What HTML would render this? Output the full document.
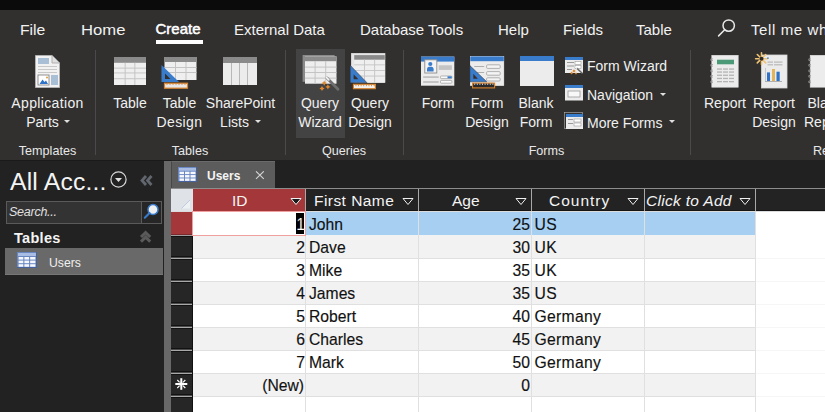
<!DOCTYPE html>
<html><head><meta charset="utf-8">
<style>
*{margin:0;padding:0;box-sizing:border-box}
html,body{width:825px;height:412px;overflow:hidden;background:#262626;font-family:"Liberation Sans",sans-serif;color:#fff}
.a{position:absolute;white-space:nowrap}
#top{left:0;top:0;width:825px;height:10px;background:#0b0b0b}
#rib{left:0;top:10px;width:825px;height:150px;background:#31302f}
.tab{font-size:15px;color:#f2f2f2;top:20.5px}
.rl{font-size:14px;color:#f0f0f0;text-align:center;line-height:19px}
.gl{font-size:12.6px;color:#e8e8e8;top:143.5px}
.sep{width:1px;background:#4a4a4a;top:50px;height:105px}
.ar{display:inline-block;width:0;height:0;border-left:3.5px solid transparent;border-right:3.5px solid transparent;border-top:3.5px solid #e0e0e0;vertical-align:middle;margin-left:6px;position:relative;top:-2px}
.hd{font-size:15.5px;color:#f4f4f4;top:191.5px}
.dt{font-size:15.7px;color:#111;-webkit-text-stroke:0.15px #111}
</style></head><body>
<div class="a" id="top"></div>
<div class="a" id="rib"></div>
<!-- tabs -->
<div class="a tab" style="left:20px;transform:scaleX(1.05);transform-origin:0 0">File</div>
<div class="a tab" style="left:80.5px;transform:scaleX(1.11);transform-origin:0 0">Home</div>
<div class="a tab" style="left:155.5px;top:20px;font-size:15px;-webkit-text-stroke:0.5px #fff;color:#fff">Create</div>
<div class="a" style="left:156px;top:40px;width:47px;height:4px;background:#fff"></div>
<div class="a tab" style="left:234px">External Data</div>
<div class="a tab" style="left:360px">Database Tools</div>
<div class="a tab" style="left:498px">Help</div>
<div class="a tab" style="left:563px">Fields</div>
<div class="a tab" style="left:636px">Table</div>
<svg class="a" style="left:716px;top:18px" width="22" height="22" viewBox="0 0 22 22"><circle cx="12.7" cy="7.6" r="5.7" fill="none" stroke="#e8e8e8" stroke-width="1.5"/><line x1="8.7" y1="11.7" x2="2.6" y2="17.9" stroke="#e8e8e8" stroke-width="1.5" stroke-linecap="round"/></svg>
<div class="a tab" style="left:751px;letter-spacing:0.6px">Tell me what you want to do</div>

<!-- separators -->
<div class="a sep" style="left:95px"></div>
<div class="a sep" style="left:285px"></div>
<div class="a sep" style="left:403px"></div>
<div class="a sep" style="left:690px"></div>

<!-- Templates group -->
<svg class="a" style="left:35px;top:55px" width="26" height="34" viewBox="0 0 26 34">
<path d="M0.5 0.5H17L24.5 8V32.5H0.5Z" fill="#f2f2f2" stroke="#b0b0b0"/>
<path d="M17 0.5V8H24.5" fill="#e0e0e0" stroke="#b0b0b0"/>
<rect x="3" y="3" width="11" height="6" fill="#a9bfd6"/>
<rect x="3" y="11" width="19" height="1" fill="#c8c8c8"/><rect x="3" y="14" width="19" height="1" fill="#c8c8c8"/><rect x="3" y="17" width="19" height="1" fill="#c8c8c8"/>
<rect x="3" y="20" width="11" height="10" fill="#fff" stroke="#777" stroke-width="0.8"/>
<path d="M4.5 29L7.5 24.5L9.5 27L11 25.5L13 29Z" fill="#2f73c8"/><circle cx="12" cy="22.5" r="1" fill="#e0a040"/>
<rect x="16" y="20" width="7" height="10" fill="#a9bfd6"/>
</svg>
<div class="a rl" style="left:0;top:94px;width:95px"><span style="letter-spacing:0.35px">Application</span><br><span style="position:relative;left:1px">Parts</span><span class="ar"></span></div>
<div class="a gl" style="left:0;width:95px;text-align:center">Templates</div>

<!-- Tables group -->
<svg class="a" style="left:114px;top:57px" width="32" height="28" viewBox="0 0 33 29" preserveAspectRatio="none">
<rect x="0" y="0" width="33" height="29" fill="#efefef"/>
<rect x="0" y="0" width="33" height="6" fill="#8a8a8a"/>
<rect x="11" y="6" width="1" height="23" fill="#c4c4c4"/><rect x="21" y="6" width="1" height="23" fill="#c4c4c4"/>
<rect x="0" y="11" width="33" height="1" fill="#c4c4c4"/><rect x="0" y="16" width="33" height="1" fill="#c4c4c4"/><rect x="0" y="22" width="33" height="1" fill="#c4c4c4"/>
</svg>
<svg class="a" style="left:161px;top:57px" width="37" height="33" viewBox="0 0 37 33">
<rect x="3.5" y="0" width="32" height="23" fill="#efefef"/>
<rect x="3.5" y="0" width="32" height="5" fill="#8a8a8a"/>
<rect x="14" y="5" width="1" height="18" fill="#c4c4c4"/><rect x="24.5" y="5" width="1" height="18" fill="#c4c4c4"/>
<rect x="3.5" y="10" width="32" height="1" fill="#c4c4c4"/><rect x="3.5" y="15" width="32" height="1" fill="#c4c4c4"/>
<path d="M0.5 8L18 25H0.5Z" fill="#3a7ccc"/><path d="M4 16.5L9.5 22H4Z" fill="#31302f"/>
<rect x="3.5" y="26.2" width="23" height="5" fill="#e8e8e8" stroke="#d9822b" stroke-width="1.2"/>
<path d="M6 26.5V28M9 26.5V28M12 26.5V28M15 26.5V28M18 26.5V28M21 26.5V28M24 26.5V28" stroke="#d9822b" stroke-width="0.8"/>
</svg>
<svg class="a" style="left:223px;top:57px" width="34" height="28" viewBox="0 0 34 28">
<rect x="0" y="0" width="34" height="28" fill="#ececec"/>
<rect x="0" y="0" width="34" height="6" fill="#8a8a8a"/>
<rect x="8" y="6" width="1" height="22" fill="#b8b8b8"/><rect x="16" y="6" width="1" height="22" fill="#b8b8b8"/><rect x="24" y="6" width="1" height="22" fill="#b8b8b8"/>
</svg>
<div class="a rl" style="left:110px;top:94px;width:40px">Table</div>
<div class="a rl" style="left:152px;top:94px;width:55px">Table<br><span style="letter-spacing:0.4px">Design</span></div>
<div class="a rl" style="left:204px;top:94px;width:73px">SharePoint<br>Lists<span class="ar"></span></div>
<div class="a gl" style="left:95px;width:190px;text-align:center">Tables</div>

<!-- Queries -->
<div class="a" style="left:296px;top:49px;width:49px;height:89px;background:#434343"></div>
<svg class="a" style="left:302px;top:55px" width="40" height="37" viewBox="0 0 40 37">
<rect x="0.6" y="-0.2" width="32" height="27" fill="#8a8a8a"/>
<rect x="3" y="1.4" width="31.5" height="27.3" fill="#eeeeee"/>
<rect x="3" y="1.4" width="31.5" height="4.8" fill="#8a8a8a"/>
<rect x="12.6" y="6.2" width="1" height="22.5" fill="#c4c4c4"/><rect x="23.2" y="6.2" width="1" height="22.5" fill="#c4c4c4"/>
<rect x="3" y="11.6" width="31.5" height="1" fill="#c4c4c4"/><rect x="3" y="17" width="31.5" height="1" fill="#c4c4c4"/><rect x="3" y="22.6" width="31.5" height="1" fill="#c4c4c4"/>
<line x1="25" y1="23" x2="36" y2="34.3" stroke="#6e6e6e" stroke-width="2.8" stroke-linecap="round"/>
<line x1="24.6" y1="22.6" x2="26.8" y2="24.9" stroke="#f4f4f4" stroke-width="1.8" stroke-linecap="round"/>
<path d="M22.2 25.5L23.11 27.19L24.8 28.1L23.11 29.01L22.2 30.700000000000003L21.29 29.01L19.599999999999998 28.1L21.29 27.19Z" fill="#e0862b"/><path d="M20 30.9L20.91 32.59L22.6 33.5L20.91 34.41L20 36.1L19.09 34.41L17.4 33.5L19.09 32.59Z" fill="#e0862b"/><path d="M25.9 29.299999999999997L26.81 30.99L28.5 31.9L26.81 32.809999999999995L25.9 34.5L24.99 32.809999999999995L23.299999999999997 31.9L24.99 30.99Z" fill="#e0862b"/>
</svg>
<svg class="a" style="left:350px;top:53px" width="37" height="37" viewBox="0 0 37 37">
<rect x="1.1" y="0.1" width="34.2" height="29.6" fill="#e6e6e6"/>
<rect x="4.2" y="2.1" width="30.6" height="27.6" fill="#efefef"/>
<rect x="4.2" y="2.1" width="30.6" height="4.6" fill="#8a8a8a"/>
<rect x="14" y="6.7" width="0.9" height="23" fill="#c4c4c4"/><rect x="24.2" y="6.7" width="0.9" height="23" fill="#c4c4c4"/>
<rect x="4.2" y="11.4" width="30.6" height="0.9" fill="#c4c4c4"/><rect x="4.2" y="17" width="30.6" height="0.9" fill="#c4c4c4"/><rect x="4.2" y="22.6" width="30.6" height="0.9" fill="#c4c4c4"/>
<path d="M0.2 12.3L17 29.7H0.2Z" fill="#3a7ccc" stroke="#31302f" stroke-width="0.5"/><path d="M3.6 21.3L8.4 26.3H3.6Z" fill="#31302f"/>
<rect x="3.4" y="31.3" width="22" height="4.4" fill="#f2f2f2" stroke="#d9822b" stroke-width="1.1"/><rect x="5.5" y="31.8" width="0.9" height="1.4" fill="#d9822b"/><rect x="8.1" y="31.8" width="0.9" height="1.4" fill="#d9822b"/><rect x="10.7" y="31.8" width="0.9" height="1.4" fill="#d9822b"/><rect x="13.3" y="31.8" width="0.9" height="1.4" fill="#d9822b"/><rect x="15.9" y="31.8" width="0.9" height="1.4" fill="#d9822b"/><rect x="18.5" y="31.8" width="0.9" height="1.4" fill="#d9822b"/><rect x="21.1" y="31.8" width="0.9" height="1.4" fill="#d9822b"/><rect x="23.7" y="31.8" width="0.9" height="1.4" fill="#d9822b"/>
</svg>
<div class="a rl" style="left:294px;top:94px;width:52px">Query<br>Wizard</div>
<div class="a rl" style="left:344px;top:94px;width:52px">Query<br>Design</div>
<div class="a gl" style="left:285px;width:118px;text-align:center">Queries</div>

<!-- Forms -->
<svg class="a" style="left:421px;top:56px" width="34" height="31" viewBox="0 0 34 31">
<rect x="0" y="0.6" width="33.3" height="29.1" fill="#ececec"/><rect x="0" y="0.6" width="33.3" height="5" fill="#3a7ccc"/>
<rect x="3.8" y="3.8" width="12" height="13.2" fill="#f4f4f4" stroke="#8c8c8c" stroke-width="0.9"/>
<circle cx="9.3" cy="8" r="2.1" fill="#3a7ccc"/><path d="M6 15.4V13.2C6 11.3 7.2 10.8 9.3 10.8C11.4 10.8 12.6 11.3 12.6 13.2V15.4Z" fill="#3a7ccc"/>
<rect x="17.7" y="9.3" width="13.2" height="4.6" fill="#c4c4c4"/>
<rect x="2.2" y="20.2" width="15.5" height="1.8" fill="#c0c0c0"/><rect x="2.2" y="25.1" width="15.5" height="1.8" fill="#c0c0c0"/>
<rect x="19.5" y="20" width="11.4" height="2.6" rx="0.8" fill="#fafafa" stroke="#9a9a9a" stroke-width="0.7"/><rect x="26.5" y="20.3" width="4.2" height="2" fill="#3a7ccc"/>
<rect x="19.5" y="24.4" width="11.4" height="2.8" rx="0.8" fill="#fafafa" stroke="#9a9a9a" stroke-width="0.7"/>
</svg>
<svg class="a" style="left:469px;top:56px" width="36" height="34" viewBox="0 0 36 34">
<rect x="1.3" y="0.4" width="33.5" height="29.1" fill="#ececec" stroke="#fafafa" stroke-width="0.6"/><rect x="1.3" y="0.4" width="33.5" height="4.8" fill="#3a7ccc"/>
<rect x="5.2" y="10" width="10" height="0.9" fill="#a8a8a8"/><rect x="5.2" y="16" width="10" height="0.9" fill="#a8a8a8"/>
<rect x="17.6" y="8.8" width="13.6" height="3.6" rx="1" fill="#f4f4f4" stroke="#a0a0a0" stroke-width="0.8"/>
<rect x="17.6" y="15.6" width="13.6" height="3.6" rx="1" fill="#f4f4f4" stroke="#a0a0a0" stroke-width="0.8"/>
<rect x="17.6" y="21.8" width="13.6" height="3.2" rx="1" fill="#f4f4f4" stroke="#a0a0a0" stroke-width="0.8"/>
<path d="M0.9 9.6L17.8 25.8H0.9Z" fill="#3a7ccc" stroke="#31302f" stroke-width="0.5"/><path d="M4.3 17.8L8.8 22.7H4.3Z" fill="#3b2e2a"/>
<rect x="3.6" y="27.1" width="22" height="4.8" fill="#2a2a2a" stroke="#d9822b" stroke-width="1.1"/><rect x="5.2" y="27.6" width="1" height="1.2" fill="#e8e8e8"/><rect x="7.8" y="27.6" width="1" height="1.2" fill="#e8e8e8"/><rect x="10.4" y="27.6" width="1" height="1.2" fill="#e8e8e8"/><rect x="13.0" y="27.6" width="1" height="1.2" fill="#e8e8e8"/><rect x="15.6" y="27.6" width="1" height="1.2" fill="#e8e8e8"/><rect x="18.2" y="27.6" width="1" height="1.2" fill="#e8e8e8"/><rect x="20.8" y="27.6" width="1" height="1.2" fill="#e8e8e8"/><rect x="23.4" y="27.6" width="1" height="1.2" fill="#e8e8e8"/>
</svg>
<svg class="a" style="left:520px;top:56px" width="34" height="30" viewBox="0 0 34 30">
<rect x="0" y="0" width="34" height="30" fill="#ececec"/><rect x="0" y="0" width="34" height="5" fill="#3a7ccc"/>
</svg>
<div class="a rl" style="left:410px;top:94px;width:56px">Form</div>
<div class="a rl" style="left:459px;top:94px;width:56px">Form<br>Design</div>
<div class="a rl" style="left:508px;top:94px;width:56px">Blank<br>Form</div>

<svg class="a" style="left:564px;top:57px" width="20" height="18" viewBox="0 0 20 18">
<rect x="1" y="0" width="18" height="16" fill="#ececec"/><rect x="1" y="0" width="18" height="3" fill="#3a7ccc"/>
<rect x="3" y="5" width="7" height="1" fill="#999"/><rect x="3" y="8.5" width="7" height="1" fill="#999"/><rect x="3" y="12" width="5" height="1" fill="#999"/>
<rect x="11" y="4.5" width="6" height="3" fill="#fff" stroke="#999" stroke-width="0.6"/><rect x="11" y="8.5" width="6" height="3" fill="#fff" stroke="#999" stroke-width="0.6"/>
<line x1="12" y1="10.5" x2="18.5" y2="16.5" stroke="#6a6a6a" stroke-width="1.6"/><line x1="11.5" y1="10" x2="13" y2="11.5" stroke="#fff" stroke-width="1.4"/>
<g fill="#e0862b"><path d="M10 12.2l0.7 1.1 1.1 0.7-1.1 0.7-0.7 1.1-0.7-1.1-1.1-0.7 1.1-0.7Z"/><path d="M7.6 14.6l0.6 0.9 0.9 0.6-0.9 0.6-0.6 0.9-0.6-0.9-0.9-0.6 0.9-0.6Z"/><path d="M12 15.2l0.5 0.8 0.8 0.5-0.8 0.5-0.5 0.8-0.5-0.8-0.8-0.5 0.8-0.5Z"/></g>
</svg>
<div class="a" style="left:587px;top:58px;font-size:14px;color:#f0f0f0">Form Wizard</div>
<svg class="a" style="left:565px;top:85px" width="19" height="16" viewBox="0 0 19 16">
<rect x="0" y="0" width="18" height="15.5" fill="#ececec"/><rect x="0" y="0" width="18" height="3" fill="#3a7ccc"/>
<rect x="3" y="6" width="12" height="6" fill="#f8f8f8" stroke="#999" stroke-width="0.8"/>
</svg>
<div class="a" style="left:587px;top:87px;font-size:14px;color:#f0f0f0">Navigation<span class="ar" style="margin-left:7px"></span></div>
<svg class="a" style="left:564px;top:112px" width="20" height="18" viewBox="0 0 20 18">
<rect x="0.3" y="0.3" width="18" height="16" fill="none" stroke="#aaa" stroke-width="0.7"/>
<rect x="2" y="2" width="17" height="15" fill="#ececec"/><rect x="2" y="2" width="17" height="3" fill="#3a7ccc"/>
<rect x="4" y="7" width="5" height="1" fill="#999"/><rect x="4" y="11" width="5" height="1" fill="#999"/>
<rect x="10" y="7" width="7" height="3" fill="#fff" stroke="#999" stroke-width="0.6"/><rect x="10" y="11" width="7" height="3" fill="#fff" stroke="#999" stroke-width="0.6"/>
</svg>
<div class="a" style="left:587px;top:114.5px;font-size:14px;color:#f0f0f0">More Forms<span class="ar" style="margin-left:7px"></span></div>
<div class="a gl" style="left:403px;width:287px;text-align:center">Forms</div>

<!-- Reports -->
<svg class="a" style="left:710px;top:55px" width="30" height="33" viewBox="0 0 30 33">
<rect x="1.8" y="0.2" width="26.4" height="32" fill="#ececec" stroke="#dcdcdc" stroke-width="0.6"/>
<rect x="7" y="4.7" width="17" height="4.6" fill="#4a9a78"/><rect x="7" y="13.4" width="5" height="1.3" fill="#b4b4b4"/><rect x="13" y="13.4" width="5" height="1.3" fill="#b4b4b4"/><rect x="19" y="13.4" width="5" height="1.3" fill="#b4b4b4"/><rect x="7" y="16.4" width="5" height="1.3" fill="#b4b4b4"/><rect x="13" y="16.4" width="5" height="1.3" fill="#b4b4b4"/><rect x="19" y="16.4" width="5" height="1.3" fill="#b4b4b4"/><rect x="7" y="19.6" width="5" height="1.3" fill="#b4b4b4"/><rect x="13" y="19.6" width="5" height="1.3" fill="#b4b4b4"/><rect x="19" y="19.6" width="5" height="1.3" fill="#b4b4b4"/><rect x="7" y="22.8" width="5" height="1.3" fill="#b4b4b4"/><rect x="13" y="22.8" width="5" height="1.3" fill="#b4b4b4"/><rect x="19" y="22.8" width="5" height="1.3" fill="#b4b4b4"/><rect x="7" y="26" width="5" height="1.3" fill="#b4b4b4"/><rect x="13" y="26" width="5" height="1.3" fill="#b4b4b4"/><rect x="19" y="26" width="5" height="1.3" fill="#b4b4b4"/><path d="M3 3.9000000000000004H0.8V5.5H3" fill="none" stroke="#9a9a9a" stroke-width="0.8"/><path d="M3 9.5H0.8V11.100000000000001H3" fill="none" stroke="#9a9a9a" stroke-width="0.8"/><path d="M3 15.1H0.8V16.7H3" fill="none" stroke="#9a9a9a" stroke-width="0.8"/><path d="M3 20.5H0.8V22.1H3" fill="none" stroke="#9a9a9a" stroke-width="0.8"/><path d="M3 26.0H0.8V27.6H3" fill="none" stroke="#9a9a9a" stroke-width="0.8"/>
</svg>
<svg class="a" style="left:754px;top:52px" width="34" height="37" viewBox="0 0 34 37">
<rect x="7.5" y="3" width="25.5" height="33" fill="#ebebeb" stroke="#d8d8d8" stroke-width="0.8"/>
<rect x="13.5" y="9.5" width="5.5" height="1.2" fill="#b8b8b8"/><rect x="20" y="9.5" width="8.5" height="1.2" fill="#b8b8b8"/>
<rect x="13.5" y="12.2" width="5.5" height="1.2" fill="#b8b8b8"/><rect x="20" y="12.2" width="8.5" height="1.2" fill="#b8b8b8"/>
<rect x="11" y="16" width="0.8" height="13.3" fill="#c0c0c0"/><rect x="11" y="29" width="17" height="0.8" fill="#a0a0a0"/>
<rect x="13" y="20.4" width="3" height="8.6" fill="#2f73c8"/><rect x="18" y="17" width="3" height="12" fill="#e2b45c"/><rect x="22.5" y="19.7" width="3.2" height="9.3" fill="#2f73c8"/>
<g stroke="#efc274" stroke-width="1.6" stroke-linecap="round"><line x1="7.5" y1="0.8" x2="7.5" y2="12.6"/><line x1="1.6" y1="6.7" x2="13.4" y2="6.7"/><line x1="3.3" y1="2.5" x2="11.7" y2="10.9"/><line x1="11.7" y1="2.5" x2="3.3" y2="10.9"/></g>
<circle cx="7.5" cy="6.7" r="2" fill="#2e2e2e"/>
<rect x="13" y="5.5" width="1.8" height="1.2" fill="#3a7ccc"/>
</svg>
<svg class="a" style="left:808px;top:55px" width="30" height="33" viewBox="0 0 30 33">
<rect x="2.2" y="0.2" width="26.4" height="32" fill="#ececec" stroke="#dcdcdc" stroke-width="0.6"/><path d="M3 3.9000000000000004H0.8V5.5H3" fill="none" stroke="#9a9a9a" stroke-width="0.8"/><path d="M3 9.5H0.8V11.100000000000001H3" fill="none" stroke="#9a9a9a" stroke-width="0.8"/><path d="M3 15.1H0.8V16.7H3" fill="none" stroke="#9a9a9a" stroke-width="0.8"/><path d="M3 20.5H0.8V22.1H3" fill="none" stroke="#9a9a9a" stroke-width="0.8"/><path d="M3 26.0H0.8V27.6H3" fill="none" stroke="#9a9a9a" stroke-width="0.8"/>
</svg>
<div class="a rl" style="left:699px;top:94px;width:52px">Report</div>
<div class="a rl" style="left:748px;top:94px;width:52px">Report<br>Design</div>
<div class="a rl" style="left:775px;top:94px;width:100px">Blank<br>Report</div>
<div class="a gl" style="left:813px">Reports</div>

<!-- below ribbon -->
<div class="a" style="left:0;top:160px;width:164px;height:252px;background:#222"></div><div class="a" style="left:0;top:160px;width:825px;height:1px;background:#1a1a1a"></div>
<div class="a" style="left:164px;top:161px;width:7px;height:251px;background:#686868"></div>
<div class="a" style="left:171px;top:160px;width:654px;height:29px;background:#212121"></div>


<!-- nav pane -->
<div class="a" style="left:10px;top:167.5px;font-size:24.7px;letter-spacing:0.2px;color:#f4f4f4">All Acc...</div>
<svg class="a" style="left:110px;top:171px" width="17" height="17" viewBox="0 0 17 17"><circle cx="8.5" cy="8.5" r="7.6" fill="none" stroke="#d8d8d8" stroke-width="1.2"/><path d="M5 7H12L8.5 11Z" fill="#e0e0e0"/></svg>
<svg class="a" style="left:140px;top:175px" width="14" height="11" viewBox="0 0 14 11"><path d="M6 1L2 5.5L6 10M11.5 1L7.5 5.5L11.5 10" fill="none" stroke="#62666e" stroke-width="2.8"/></svg>
<div class="a" style="left:6px;top:201px;width:156px;height:23px;background:#333;border:1px solid #5a5a5a"></div>
<div class="a" style="left:141px;top:202px;width:1px;height:21px;background:#5a5a5a"></div>
<div class="a" style="left:142px;top:202px;width:19px;height:21px;background:#262626"></div>
<svg class="a" style="left:143px;top:203px" width="17" height="17" viewBox="0 0 17 17"><circle cx="10" cy="6.5" r="5" fill="#f0f0f0" stroke="#3a7ccc" stroke-width="1.5"/><line x1="6.5" y1="10" x2="1.8" y2="14.7" stroke="#3a7ccc" stroke-width="2" stroke-linecap="round"/></svg>
<div class="a" style="left:9px;top:205px;font-size:12.5px;letter-spacing:-0.25px;font-style:italic;color:#e0e0e0">Search...</div>
<div class="a" style="left:14px;top:230px;font-size:14.5px;letter-spacing:0.3px;font-weight:bold;color:#f4f4f4">Tables</div>
<svg class="a" style="left:139px;top:230px" width="14" height="14" viewBox="0 0 14 14"><path d="M2 7L6.6 2.6L11.2 7M2 11.6L6.6 7.2L11.2 11.6" fill="none" stroke="#5a5a5a" stroke-width="3"/></svg>
<div class="a" style="left:5px;top:248px;width:158px;height:27px;background:#696969;border-bottom:1px solid #777"></div>
<svg class="a" style="left:17px;top:252px" width="20" height="16" viewBox="0 0 19 16" preserveAspectRatio="none"><rect x="0" y="0" width="19" height="16" fill="#6886c2"/><rect x="0" y="15" width="19" height="1" fill="#46629c"/><rect x="18" y="0" width="1" height="16" fill="#46629c"/><rect x="1" y="1" width="17" height="3" fill="#a9bde3"/><g fill="#f6f8fc"><rect x="1.5" y="5" width="4.5" height="2.6"/><rect x="7" y="5" width="4.5" height="2.6"/><rect x="12.5" y="5" width="5" height="2.6"/><rect x="1.5" y="8.6" width="4.5" height="2.6"/><rect x="7" y="8.6" width="4.5" height="2.6"/><rect x="12.5" y="8.6" width="5" height="2.6"/><rect x="1.5" y="12.2" width="4.5" height="2.6"/><rect x="7" y="12.2" width="4.5" height="2.6"/><rect x="12.5" y="12.2" width="5" height="2.6"/></g></svg>
<div class="a" style="left:49px;top:256px;font-size:12.2px;color:#f0f0f0">Users</div>

<!-- doc tab -->
<div class="a" style="left:171px;top:161px;width:104px;height:28px;background:#5c5c5c;border-top:1px solid #6a6a6a;border-left:1px solid #474747"></div>
<svg class="a" style="left:178px;top:167px" width="19" height="15" viewBox="0 0 19 16" preserveAspectRatio="none"><rect x="0" y="0" width="19" height="16" fill="#6886c2"/><rect x="0" y="15" width="19" height="1" fill="#46629c"/><rect x="18" y="0" width="1" height="16" fill="#46629c"/><rect x="1" y="1" width="17" height="3" fill="#a9bde3"/><g fill="#f6f8fc"><rect x="1.5" y="5" width="4.5" height="2.6"/><rect x="7" y="5" width="4.5" height="2.6"/><rect x="12.5" y="5" width="5" height="2.6"/><rect x="1.5" y="8.6" width="4.5" height="2.6"/><rect x="7" y="8.6" width="4.5" height="2.6"/><rect x="12.5" y="8.6" width="5" height="2.6"/><rect x="1.5" y="12.2" width="4.5" height="2.6"/><rect x="7" y="12.2" width="4.5" height="2.6"/><rect x="12.5" y="12.2" width="5" height="2.6"/></g></svg>
<div class="a" style="left:207px;top:169px;font-size:12px;font-weight:bold;color:#f4f4f4">Users</div>
<svg class="a" style="left:255px;top:171px" width="10" height="9" viewBox="0 0 10 9"><path d="M1 0.3L8.8 7.8M8.8 0.3L1 7.8" stroke="#d4d4d4" stroke-width="1.1"/></svg>
<!-- datasheet -->
<div class="a" style="left:171px;top:188px;width:654px;height:224px;background:#fff"></div>
<div class="a" style="left:171px;top:188px;width:654px;height:1px;background:#8c8c8c"></div>
<div class="a" style="left:171px;top:189px;width:654px;height:22px;background:#232323"></div>
<div class="a" style="left:171px;top:210px;width:654px;height:1px;background:#151515"></div>
<div class="a" style="left:171px;top:211px;width:654px;height:1px;background:#dcdcdc"></div>
<div class="a" style="left:171px;top:189px;width:22px;height:22px;background:#dfe3e8"></div>
<svg class="a" style="left:171px;top:189px" width="22" height="22" viewBox="0 0 22 22"><path d="M19 11L19 19.5L10.5 19.5Z" fill="#eef1f4"/><line x1="10.5" y1="19.5" x2="19" y2="11" stroke="#b4c4da" stroke-width="0.8"/></svg>
<div class="a" style="left:193px;top:189px;width:112px;height:22px;background:#a4373a"></div>
<div class="a" style="left:305px;top:189px;width:1px;height:22px;background:#a8a8a8"></div>
<div class="a" style="left:418px;top:189px;width:1px;height:22px;background:#a8a8a8"></div>
<div class="a" style="left:531px;top:189px;width:1px;height:22px;background:#a8a8a8"></div>
<div class="a" style="left:644px;top:189px;width:1px;height:22px;background:#a8a8a8"></div>
<div class="a" style="left:755px;top:189px;width:1px;height:22px;background:#a8a8a8"></div>
<div class="a hd" style="left:232px">ID</div>
<svg class="a" style="left:290px;top:197px" width="12" height="9" viewBox="0 0 12 9"><path d="M1 1.5H11L6 7.5Z" fill="#1a1a1a" stroke="#f0f0f0" stroke-width="1"/></svg>
<div class="a hd" style="left:314px;letter-spacing:0.45px">First Name</div>
<svg class="a" style="left:402px;top:197px" width="12" height="9" viewBox="0 0 12 9"><path d="M1 1.5H11L6 7.5Z" fill="#232323" stroke="#f0f0f0" stroke-width="1"/></svg>
<div class="a hd" style="left:452px">Age</div>
<svg class="a" style="left:515px;top:197px" width="12" height="9" viewBox="0 0 12 9"><path d="M1 1.5H11L6 7.5Z" fill="#232323" stroke="#f0f0f0" stroke-width="1"/></svg>
<div class="a hd" style="left:549px;letter-spacing:1px">Country</div>
<svg class="a" style="left:627px;top:197px" width="12" height="9" viewBox="0 0 12 9"><path d="M1 1.5H11L6 7.5Z" fill="#232323" stroke="#f0f0f0" stroke-width="1"/></svg>
<div class="a hd" style="left:646px;font-style:italic;letter-spacing:0.3px">Click to Add</div>
<svg class="a" style="left:739px;top:197px" width="12" height="9" viewBox="0 0 12 9"><path d="M1 1.5H11L6 7.5Z" fill="#232323" stroke="#f0f0f0" stroke-width="1"/></svg>
<div class="a" style="left:306px;top:212px;width:449px;height:23px;background:#a6cff2"></div>
<div class="a" style="left:171px;top:212px;width:21px;height:23px;background:#a4373a"></div>
<div class="a" style="left:193px;top:235px;width:562px;height:23px;background:#f2f2f2"></div>
<div class="a" style="left:171px;top:235px;width:21px;height:23px;background:#262626"></div>
<div class="a" style="left:193px;top:258px;width:562px;height:23px;background:#ffffff"></div>
<div class="a" style="left:171px;top:258px;width:21px;height:23px;background:#262626"></div>
<div class="a" style="left:193px;top:281px;width:562px;height:23px;background:#f2f2f2"></div>
<div class="a" style="left:171px;top:281px;width:21px;height:23px;background:#262626"></div>
<div class="a" style="left:193px;top:304px;width:562px;height:23px;background:#ffffff"></div>
<div class="a" style="left:171px;top:304px;width:21px;height:23px;background:#262626"></div>
<div class="a" style="left:193px;top:327px;width:562px;height:23px;background:#f2f2f2"></div>
<div class="a" style="left:171px;top:327px;width:21px;height:23px;background:#262626"></div>
<div class="a" style="left:193px;top:350px;width:562px;height:23px;background:#ffffff"></div>
<div class="a" style="left:171px;top:350px;width:21px;height:23px;background:#262626"></div>
<div class="a" style="left:193px;top:373px;width:562px;height:23px;background:#f2f2f2"></div>
<div class="a" style="left:171px;top:373px;width:21px;height:23px;background:#262626"></div>
<div class="a" style="left:193px;top:396px;width:562px;height:23px;background:#ffffff"></div>
<div class="a" style="left:171px;top:396px;width:21px;height:23px;background:#262626"></div>
<div class="a" style="left:171px;top:234px;width:21px;height:1px;background:#7a2a2c"></div>
<div class="a" style="left:171px;top:235px;width:21px;height:1px;background:#a0a0a0"></div>
<div class="a" style="left:171px;top:236px;width:21px;height:1px;background:#121212"></div>
<div class="a" style="left:171px;top:256px;width:21px;height:1px;background:#121212"></div>
<div class="a" style="left:171px;top:257px;width:21px;height:1px;background:#4a4a4a"></div>
<div class="a" style="left:171px;top:258px;width:21px;height:1px;background:#a8a8a8"></div>
<div class="a" style="left:171px;top:259px;width:21px;height:1px;background:#121212"></div>
<div class="a" style="left:193px;top:258px;width:563px;height:1px;background:#e0e0e0"></div>
<div class="a" style="left:756px;top:258px;width:69px;height:1px;background:#f6f6f6"></div>
<div class="a" style="left:171px;top:279px;width:21px;height:1px;background:#121212"></div>
<div class="a" style="left:171px;top:280px;width:21px;height:1px;background:#4a4a4a"></div>
<div class="a" style="left:171px;top:281px;width:21px;height:1px;background:#a8a8a8"></div>
<div class="a" style="left:171px;top:282px;width:21px;height:1px;background:#121212"></div>
<div class="a" style="left:193px;top:281px;width:563px;height:1px;background:#e0e0e0"></div>
<div class="a" style="left:756px;top:281px;width:69px;height:1px;background:#f6f6f6"></div>
<div class="a" style="left:171px;top:302px;width:21px;height:1px;background:#121212"></div>
<div class="a" style="left:171px;top:303px;width:21px;height:1px;background:#4a4a4a"></div>
<div class="a" style="left:171px;top:304px;width:21px;height:1px;background:#a8a8a8"></div>
<div class="a" style="left:171px;top:305px;width:21px;height:1px;background:#121212"></div>
<div class="a" style="left:193px;top:304px;width:563px;height:1px;background:#e0e0e0"></div>
<div class="a" style="left:756px;top:304px;width:69px;height:1px;background:#f6f6f6"></div>
<div class="a" style="left:171px;top:325px;width:21px;height:1px;background:#121212"></div>
<div class="a" style="left:171px;top:326px;width:21px;height:1px;background:#4a4a4a"></div>
<div class="a" style="left:171px;top:327px;width:21px;height:1px;background:#a8a8a8"></div>
<div class="a" style="left:171px;top:328px;width:21px;height:1px;background:#121212"></div>
<div class="a" style="left:193px;top:327px;width:563px;height:1px;background:#e0e0e0"></div>
<div class="a" style="left:756px;top:327px;width:69px;height:1px;background:#f6f6f6"></div>
<div class="a" style="left:171px;top:348px;width:21px;height:1px;background:#121212"></div>
<div class="a" style="left:171px;top:349px;width:21px;height:1px;background:#4a4a4a"></div>
<div class="a" style="left:171px;top:350px;width:21px;height:1px;background:#a8a8a8"></div>
<div class="a" style="left:171px;top:351px;width:21px;height:1px;background:#121212"></div>
<div class="a" style="left:193px;top:350px;width:563px;height:1px;background:#e0e0e0"></div>
<div class="a" style="left:756px;top:350px;width:69px;height:1px;background:#f6f6f6"></div>
<div class="a" style="left:171px;top:371px;width:21px;height:1px;background:#121212"></div>
<div class="a" style="left:171px;top:372px;width:21px;height:1px;background:#4a4a4a"></div>
<div class="a" style="left:171px;top:373px;width:21px;height:1px;background:#a8a8a8"></div>
<div class="a" style="left:171px;top:374px;width:21px;height:1px;background:#121212"></div>
<div class="a" style="left:193px;top:373px;width:563px;height:1px;background:#e0e0e0"></div>
<div class="a" style="left:756px;top:373px;width:69px;height:1px;background:#f6f6f6"></div>
<div class="a" style="left:171px;top:394px;width:21px;height:1px;background:#121212"></div>
<div class="a" style="left:171px;top:395px;width:21px;height:1px;background:#4a4a4a"></div>
<div class="a" style="left:171px;top:396px;width:21px;height:1px;background:#a8a8a8"></div>
<div class="a" style="left:171px;top:397px;width:21px;height:1px;background:#121212"></div>
<div class="a" style="left:193px;top:396px;width:563px;height:1px;background:#e0e0e0"></div>
<div class="a" style="left:756px;top:396px;width:69px;height:1px;background:#f6f6f6"></div>
<div class="a" style="left:192px;top:212px;width:1px;height:200px;background:#111"></div>
<div class="a" style="left:305px;top:212px;width:1px;height:200px;background:#e0e0e0"></div>
<div class="a" style="left:418px;top:212px;width:1px;height:200px;background:#e0e0e0"></div>
<div class="a" style="left:531px;top:212px;width:1px;height:200px;background:#e0e0e0"></div>
<div class="a" style="left:644px;top:212px;width:1px;height:200px;background:#e0e0e0"></div>
<div class="a" style="left:755px;top:212px;width:1px;height:200px;background:#e0e0e0"></div>
<div class="a" style="left:192px;top:211px;width:114px;height:25px;border:1px solid #f0a0a0;background:#fff"></div>
<div class="a" style="left:296px;top:213px;width:8px;height:21px;background:#000"></div>
<div class="a dt" style="left:194px;top:216px;width:111px;text-align:right;color:#fff">1</div>
<div class="a dt" style="left:309px;top:216px">John</div>
<div class="a dt" style="left:420px;top:216px;width:110px;text-align:right">25</div>
<div class="a dt" style="left:534.5px;top:216px;letter-spacing:0.3px">US</div>
<div class="a dt" style="left:194px;top:239px;width:111px;text-align:right">2</div>
<div class="a dt" style="left:309px;top:239px">Dave</div>
<div class="a dt" style="left:420px;top:239px;width:110px;text-align:right">30</div>
<div class="a dt" style="left:534.5px;top:239px;letter-spacing:0.3px">UK</div>
<div class="a dt" style="left:194px;top:262px;width:111px;text-align:right">3</div>
<div class="a dt" style="left:309px;top:262px">Mike</div>
<div class="a dt" style="left:420px;top:262px;width:110px;text-align:right">35</div>
<div class="a dt" style="left:534.5px;top:262px;letter-spacing:0.3px">UK</div>
<div class="a dt" style="left:194px;top:285px;width:111px;text-align:right">4</div>
<div class="a dt" style="left:309px;top:285px">James</div>
<div class="a dt" style="left:420px;top:285px;width:110px;text-align:right">35</div>
<div class="a dt" style="left:534.5px;top:285px;letter-spacing:0.3px">US</div>
<div class="a dt" style="left:194px;top:308px;width:111px;text-align:right">5</div>
<div class="a dt" style="left:309px;top:308px">Robert</div>
<div class="a dt" style="left:420px;top:308px;width:110px;text-align:right">40</div>
<div class="a dt" style="left:534.5px;top:308px;letter-spacing:0.3px">Germany</div>
<div class="a dt" style="left:194px;top:331px;width:111px;text-align:right">6</div>
<div class="a dt" style="left:309px;top:331px">Charles</div>
<div class="a dt" style="left:420px;top:331px;width:110px;text-align:right">45</div>
<div class="a dt" style="left:534.5px;top:331px;letter-spacing:0.3px">Germany</div>
<div class="a dt" style="left:194px;top:354px;width:111px;text-align:right">7</div>
<div class="a dt" style="left:309px;top:354px">Mark</div>
<div class="a dt" style="left:420px;top:354px;width:110px;text-align:right">50</div>
<div class="a dt" style="left:534.5px;top:354px;letter-spacing:0.3px">Germany</div>
<div class="a dt" style="left:194px;top:377px;width:110px;text-align:right">(New)</div>
<div class="a dt" style="left:420px;top:377px;width:110px;text-align:right">0</div>
<svg class="a" style="left:175px;top:378px" width="13" height="13" viewBox="0 0 13 13"><g stroke="#fff"><line x1="6.3" y1="0.2" x2="6.3" y2="11.8" stroke-width="2"/><line x1="0.3" y1="6" x2="12.3" y2="6" stroke-width="2"/><line x1="2.3" y1="2" x2="4.6" y2="4.3" stroke-width="1.2"/><line x1="10.3" y1="2" x2="8" y2="4.3" stroke-width="1.2"/><line x1="2.3" y1="10" x2="4.6" y2="7.7" stroke-width="1.2"/><line x1="10.3" y1="10" x2="8" y2="7.7" stroke-width="1.2"/></g><circle cx="6.3" cy="6" r="1.8" fill="#fff"/></svg>
</body></html>
